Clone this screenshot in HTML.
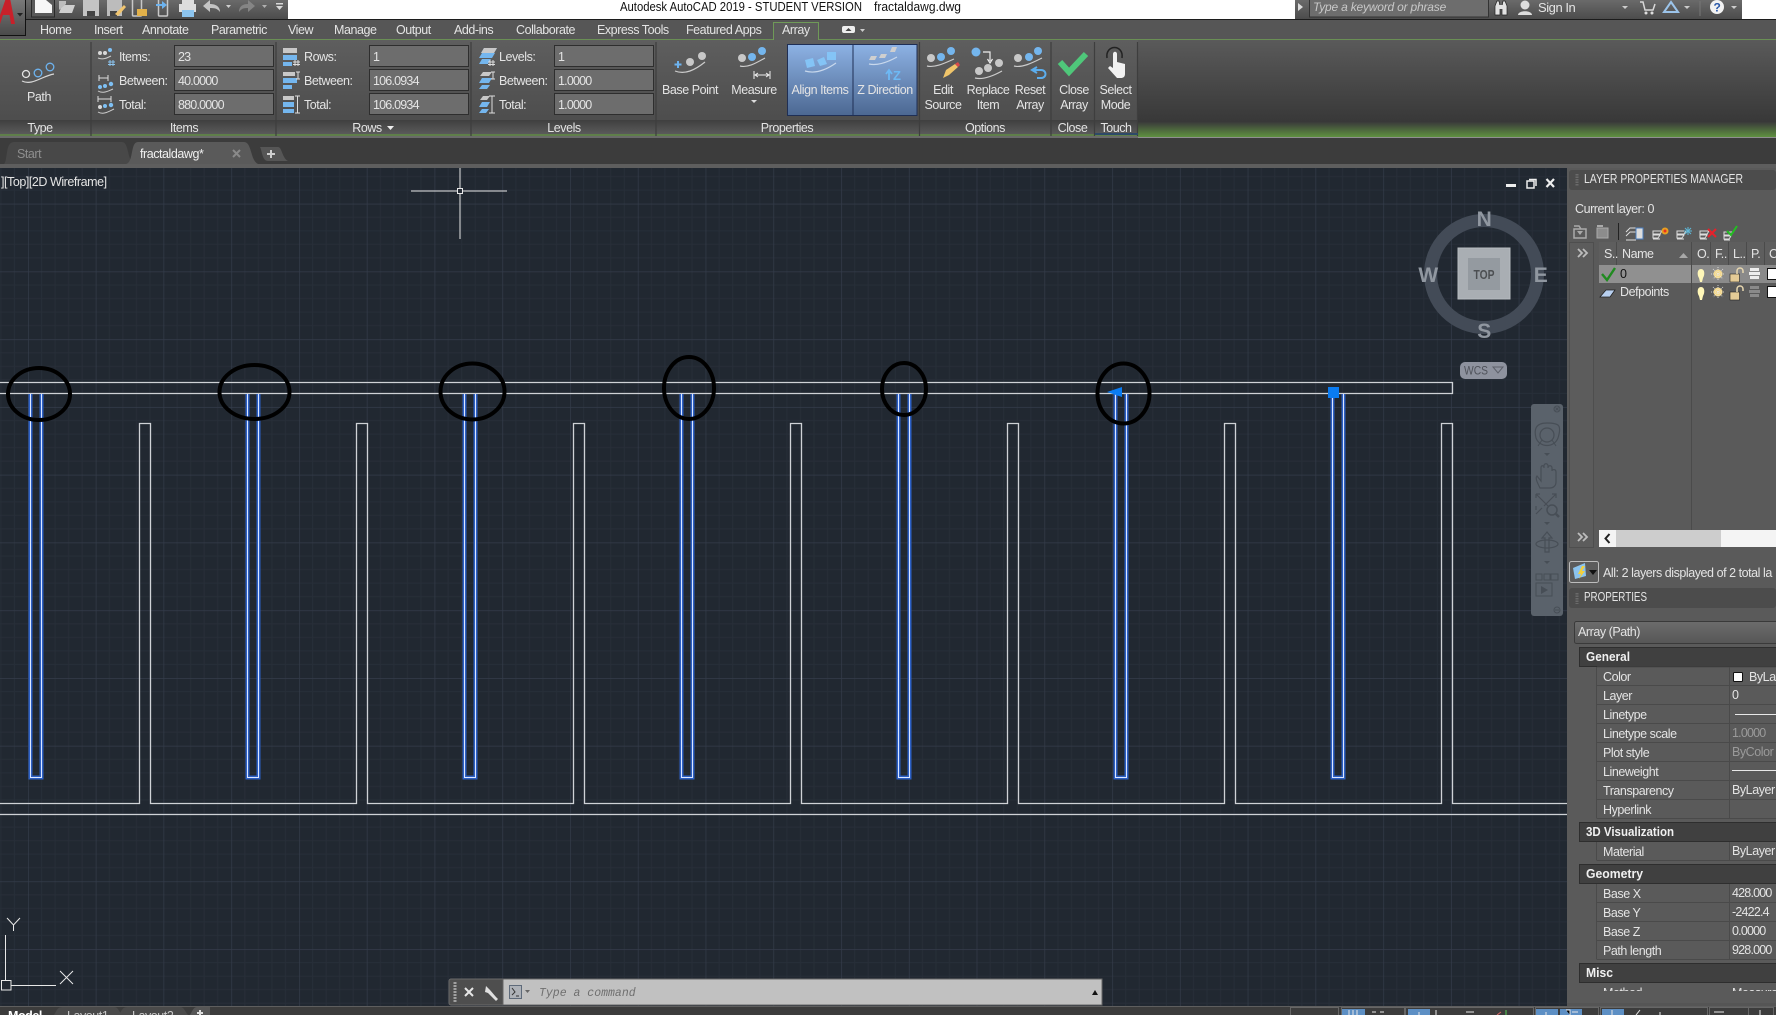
<!DOCTYPE html>
<html><head><meta charset="utf-8"><title>AutoCAD</title>
<style>
html,body{margin:0;padding:0;background:#3b3b3b;width:1776px;height:1015px;overflow:hidden}
svg{display:block}
text{font-family:"Liberation Sans",sans-serif;font-size:12.5px;fill:#e4e4e4;letter-spacing:-.45px}
.c{text-anchor:middle}
.b{font-weight:bold;fill:#f0f0f0}
.g{fill:#9a9a9a}
.v{letter-spacing:-.8px}
</style></head><body>
<svg width="1776" height="1015" viewBox="0 0 1776 1015" xmlns="http://www.w3.org/2000/svg">
<defs>
<linearGradient id="rb" x1="0" y1="0" x2="0" y2="1"><stop offset="0" stop-color="#5e5e5e"/><stop offset="1" stop-color="#4a4a4a"/></linearGradient>
<linearGradient id="rr" x1="0" y1="0" x2="0" y2="1"><stop offset="0" stop-color="#5a5a5a"/><stop offset="1" stop-color="#383838"/></linearGradient>
<linearGradient id="gb" x1="0" y1="0" x2="0" y2="1"><stop offset="0" stop-color="#3a3a3a"/><stop offset="1" stop-color="#5f9140"/></linearGradient>
<linearGradient id="pt" x1="0" y1="0" x2="0" y2="1"><stop offset="0" stop-color="#3f3f3f"/><stop offset="1" stop-color="#5a5a5a"/></linearGradient>
<linearGradient id="bl" x1="0" y1="0" x2="0" y2="1"><stop offset="0" stop-color="#8db2e4"/><stop offset="1" stop-color="#4c6892"/></linearGradient>
<linearGradient id="qa" x1="0" y1="0" x2="0" y2="1"><stop offset="0" stop-color="#6a6a6a"/><stop offset="1" stop-color="#4c4c4c"/></linearGradient>
<linearGradient id="ab" x1="0" y1="0" x2="0" y2="1"><stop offset="0" stop-color="#7a7a7a"/><stop offset="1" stop-color="#4a4a4a"/></linearGradient>
<linearGradient id="dd" x1="0" y1="0" x2="0" y2="1"><stop offset="0" stop-color="#6c6c6c"/><stop offset="1" stop-color="#565656"/></linearGradient>
<pattern id="grid" patternUnits="userSpaceOnUse" width="67.76" height="67.76" patternTransform="translate(28 0.4)">
<rect width="67.76" height="67.76" fill="#212831"/>
<path d="M13.55 0V67.76M27.1 0V67.76M40.65 0V67.76M54.2 0V67.76M0 13.55H67.76M0 27.1H67.76M0 40.65H67.76M0 54.2H67.76" stroke="#272e38" stroke-width="1" fill="none"/>
<path d="M0 0V67.76M0 0H67.76" stroke="#343c4a" stroke-width="1.4" fill="none"/>
</pattern>
</defs>

<!-- title bar -->
<rect width="1776" height="19" fill="#ffffff"/>
<rect width="288" height="19" fill="url(#qa)"/>
<rect x="1295" width="447" height="19" fill="url(#qa)"/>
<rect y="19" width="1776" height="1" fill="#1c1c1c"/>
<text x="620" y="11" textLength="242" lengthAdjust="spacingAndGlyphs" style="font-size:12.5px;fill:#111;letter-spacing:0">Autodesk AutoCAD 2019 - STUDENT VERSION</text>
<text x="874" y="11" textLength="87" lengthAdjust="spacingAndGlyphs" style="font-size:12.5px;fill:#111;letter-spacing:0">fractaldawg.dwg</text>

<!-- quick access icons -->
<rect x="31.500" y="-1" width="23" height="18" fill="#5a5a5a" stroke="#2a2a2a"/>
<path d="M35 0H46L52 5V13H35Z" fill="#f6f6f6"/>
<path d="M59 13 L62 5 H75 L72 13Z" fill="#cfcfcf"/><path d="M59 10V1H66V4" fill="#bdbdbd"/>
<path d="M83 0H99V16H83Z" fill="#c4c4c4"/><rect x="87" y="11" width="8" height="5" fill="#444"/>
<path d="M107 0H122V16H107Z" fill="#bcbcbc"/><rect x="110" y="11" width="7" height="5" fill="#444"/><path d="M115 14L124 5L126 7L118 16Z" fill="#f1c56f"/>
<rect x="132.500" y="-1" width="9" height="17" rx="1" fill="none" stroke="#c8c8c8" stroke-width="1.500"/><path d="M137 9H147V16H137Z" fill="#e2b14a"/>
<rect x="158.500" y="-1" width="9" height="17" rx="1" fill="none" stroke="#c8c8c8" stroke-width="1.500"/><path d="M156 4H162V1L167 5L162 9V6H156Z" fill="#6db3ef"/>
<rect x="182" y="-1" width="12" height="5" fill="#ddd"/><rect x="179" y="4" width="17" height="8" fill="#ddd"/><rect x="182" y="10" width="12" height="7" fill="#8cc4ee"/>
<path d="M203 6L210 0V4C215 4 220 6 220 12C217 8 214 8 210 8V12Z" fill="#c4c4c4"/>
<path d="M226 5H231L228.500 8Z" fill="#d0d0d0"/>
<path d="M255 6L248 0V4C243 4 239 6 239 12C242 8 244 8 248 8V12Z" fill="#858585"/>
<path d="M262 5H267L264.500 8Z" fill="#b0b0b0"/>
<path d="M276 3H283V4.500H276ZM276 6H283L279.500 10Z" fill="#d8d8d8"/>

<!-- right title icons -->
<rect x="1309.500" y="-1" width="179" height="18" fill="#6d6d6d" stroke="#333"/>
<path d="M1298 3L1303 7L1298 11Z" fill="#ddd"/>
<text x="1313" y="11" style="font-size:12px;font-style:italic;fill:#c8c8c8;letter-spacing:-.2px">Type a keyword or phrase</text>
<path d="M1495 15V6L1497 1H1499L1500 6V15ZM1502 15V6L1503 1H1505L1507 6V15Z" fill="#e2e2e2" stroke="#222" stroke-width=".7"/><rect x="1499.500" y="5" width="3" height="4" fill="#e2e2e2"/>
<circle cx="1525" cy="5" r="4.500" fill="#ddd"/><path d="M1518 15C1518 10 1532 10 1532 15Z" fill="#ddd"/>
<text x="1538" y="12" style="font-size:13px">Sign In</text>
<path d="M1622 6H1628L1625 9Z" fill="#ccc"/>
<path d="M1640 2H1643L1645 10H1653L1655 4" stroke="#d8d8d8" stroke-width="1.500" fill="none"/><circle cx="1646" cy="13" r="1.500" fill="#ddd"/><circle cx="1652" cy="13" r="1.500" fill="#ddd"/>
<path d="M1671 2L1678 12H1664Z" stroke="#9cc4ea" stroke-width="2" fill="none"/>
<path d="M1684 6H1690L1687 9Z" fill="#ccc"/>
<rect x="1699.500" y="1" width="1" height="15" fill="#777"/>
<circle cx="1717" cy="7" r="7" fill="#f2f2f2"/><text x="1717" y="11.500" class="c" style="font-size:12px;font-weight:bold;fill:#2a58a8">?</text>
<path d="M1731 6H1737L1734 9Z" fill="#ccc"/>

<!-- menu -->
<rect y="20" width="1776" height="19" fill="#565656"/>
<rect y="39" width="1776" height="1" fill="#6a8f55"/>
<g>
<text x="40" y="34">Home</text><text x="94" y="34">Insert</text><text x="142" y="34">Annotate</text><text x="211" y="34">Parametric</text><text x="288" y="34">View</text><text x="334" y="34">Manage</text><text x="396" y="34">Output</text><text x="454" y="34">Add-ins</text><text x="516" y="34">Collaborate</text><text x="597" y="34">Express Tools</text><text x="686" y="34">Featured Apps</text>
</g>
<path d="M773.500 40V22.500H818.500V40" fill="#5c5c5c" stroke="#6f9a58"/>
<text x="782" y="34">Array</text>
<rect x="842" y="26" width="13" height="7" rx="2" fill="#eee"/><path d="M845.500 31L848.500 28L851.500 31Z" fill="#444"/>
<path d="M860 29H865L862.500 32Z" fill="#ccc"/>

<!-- ribbon -->
<rect y="40" width="1138" height="97" fill="url(#rb)"/>
<rect x="1138" y="40" width="638" height="82" fill="url(#rr)"/>
<rect x="1138" y="122" width="638" height="15" fill="url(#gb)"/>
<rect x="1138" y="137" width="638" height="1" fill="#8f8f8f"/>
<rect y="120" width="1138" height="14" fill="url(#pt)"/>
<rect y="134" width="1138" height="2" fill="#5f7f4a"/>
<rect y="136" width="1138" height="2" fill="#6a6a6a"/>
<path d="M91 42V136M276 42V136M471 42V136M656 42V136M919.500 42V136M1051 42V136M1094.500 42V136M1137.500 42V136" stroke="#3e3e3e" stroke-width="1.200"/>
<rect x="1095" y="133" width="43" height="2" fill="#2d4a68"/>
<text class="c" x="40" y="132">Type</text><text class="c" x="184" y="132">Items</text><text class="c" x="367" y="132">Rows</text><path d="M387 126H394L390.500 130Z" fill="#eee"/><text class="c" x="564" y="132">Levels</text><text class="c" x="787" y="132">Properties</text><text class="c" x="985" y="132">Options</text><text class="c" x="1072.500" y="132">Close</text><text class="c" x="1116" y="132">Touch</text>

<!-- A logo -->
<rect x="-1" y="-1" width="26.500" height="36.500" fill="url(#ab)" stroke="#111"/>
<path d="M-3 24L6 -2H10L15 24H11L9.500 15H3L0 24Z" fill="#c8202a"/>
<path d="M17 13H23L20 16.500Z" fill="#222"/>

<!-- path icon -->
<circle cx="26" cy="74" r="3.500" fill="none" stroke="#e4e4e4" stroke-width="1.300"/><circle cx="38" cy="73" r="3.800" fill="none" stroke="#6db3ef" stroke-width="1.300"/><circle cx="50" cy="67" r="3.800" fill="none" stroke="#6db3ef" stroke-width="1.300"/>
<path d="M22 81C32 86 42 76 54 74" fill="none" stroke="#d8d8d8" stroke-width="1.200"/>
<text class="c" x="39" y="101">Path</text>

<!-- fields -->
<g fill="#6d6d6d" stroke="#2e2e2e" stroke-width="1">
<rect x="174.500" y="45.500" width="99" height="21"/><rect x="174.500" y="69.500" width="99" height="21"/><rect x="174.500" y="93.500" width="99" height="21"/>
<rect x="369.500" y="45.500" width="99" height="21"/><rect x="369.500" y="69.500" width="99" height="21"/><rect x="369.500" y="93.500" width="99" height="21"/>
<rect x="554.500" y="45.500" width="99" height="21"/><rect x="554.500" y="69.500" width="99" height="21"/><rect x="554.500" y="93.500" width="99" height="21"/>
</g>
<text x="119" y="61">Items:</text><text x="119" y="85">Between:</text><text x="119" y="109">Total:</text>
<text x="304" y="61">Rows:</text><text x="304" y="85">Between:</text><text x="304" y="109">Total:</text>
<text x="499" y="61">Levels:</text><text x="499" y="85">Between:</text><text x="499" y="109">Total:</text>
<text class="v" x="178" y="61">23</text><text class="v" x="178" y="85">40.0000</text><text class="v" x="178" y="109">880.0000</text>
<text class="v" x="373" y="61">1</text><text class="v" x="373" y="85">106.0934</text><text class="v" x="373" y="109">106.0934</text>
<text class="v" x="558" y="61">1</text><text class="v" x="558" y="85">1.0000</text><text class="v" x="558" y="109">1.0000</text>

<!-- items icons -->
<g fill="#d8d8d8"><circle cx="100" cy="53" r="2"/><circle cx="105" cy="53" r="2"/></g>
<circle cx="110" cy="50" r="2" fill="#7ec0f4"/><path d="M98 58C103 60 107 58 111 56" stroke="#ccc" fill="none"/><path d="M110 60V66M113 60V66M108 62H115M108 64.500H115" stroke="#8cc4ee"/>
<path d="M99 75V81M108 75V81M99 78H108" stroke="#ddd"/><circle cx="100" cy="87" r="2" fill="#7ec0f4"/><circle cx="105" cy="86" r="2" fill="#7ec0f4"/><circle cx="111" cy="84" r="2.200" fill="#7ec0f4"/><path d="M98 91C103 94 108 91 113 89" stroke="#ccc" fill="none"/>
<path d="M98 96V102M111 96V102M98 99H111" stroke="#ddd"/><circle cx="100" cy="107" r="2" fill="#d8d8d8"/><circle cx="105" cy="106" r="2" fill="#7ec0f4"/><circle cx="111" cy="105" r="2.200" fill="#7ec0f4"/><path d="M98 112C103 115 108 112 114 109" stroke="#ccc" fill="none"/>
<!-- rows icons -->
<rect x="283" y="48" width="14" height="5" fill="#c8c8c8"/><rect x="283" y="55" width="14" height="5" fill="#74b6ee"/><rect x="283" y="62" width="9" height="4" fill="#74b6ee"/><path d="M295 60V66M298 60V66M293 62H300M293 64.500H300" stroke="#ddd"/>
<rect x="283" y="72" width="12" height="4" fill="#c8c8c8"/><rect x="283" y="78" width="14" height="5" fill="#74b6ee"/><rect x="283" y="85" width="9" height="4" fill="#74b6ee"/><path d="M296 72H300M296 79H300M298 72V79" stroke="#ddd"/>
<rect x="283" y="96" width="11" height="4" fill="#c8c8c8"/><rect x="283" y="102" width="11" height="5" fill="#74b6ee"/><rect x="283" y="109" width="11" height="4" fill="#74b6ee"/><path d="M295 96H300M295 113H300M297.500 96V113" stroke="#ddd"/>
<!-- level icons -->
<path d="M481 53L484 48H497L494 53ZM479 58L482 53H495L492 58ZM479 64L482 59H491L488 64Z" fill="#74b6ee"/><path d="M481 53L484 48H497L494 53Z" fill="#c8c8c8"/><path d="M490 60V66M493 60V66M488 62H495M488 64.500H495" stroke="#ddd"/>
<path d="M480 76L483 72H492L489 76Z" fill="#c8c8c8"/><path d="M479 83L482 78H492L489 83ZM479 89L482 85H490L487 89Z" fill="#74b6ee"/><path d="M491 72H495M491 79H495M493 72V79" stroke="#ddd"/>
<path d="M480 100L483 96H490L487 100Z" fill="#c8c8c8"/><path d="M479 107L482 102H490L487 107ZM479 113L482 109H489L486 113Z" fill="#74b6ee"/><path d="M489 96H495M489 113H495M492 96V113" stroke="#ddd"/>

<!-- properties -->
<path d="M675 71C685 75 695 70 705 62" fill="none" stroke="#ccc" stroke-width="1.200"/><circle cx="690" cy="62" r="4" fill="#c8c8c8"/><circle cx="702" cy="56" r="4" fill="#c8c8c8"/><path d="M678 61V68M674.500 64.500H681.500" stroke="#6db3ef" stroke-width="2"/>
<text class="c" x="690" y="94">Base Point</text>
<circle cx="742" cy="58" r="4" fill="#c8c8c8"/><circle cx="752" cy="57" r="4" fill="#74b6ee"/><circle cx="762" cy="51" r="4" fill="#74b6ee"/><path d="M740 66C748 68 756 63 765 58" stroke="#ccc" fill="none" stroke-width="1.200"/><path d="M754 71V79M770 71V79M755 75H769M758 73L755 75L758 77M766 73L769 75L766 77" stroke="#eee" fill="none"/>
<text class="c" x="754" y="94">Measure</text><path d="M751 100H757L754 103Z" fill="#ddd"/>
<rect x="787.500" y="44.500" width="65.500" height="71" fill="url(#bl)" stroke="#1f2f55"/><rect x="853" y="44.500" width="64" height="71" fill="url(#bl)" stroke="#1f2f55"/>
<path d="M805 60L813 58L815 66L807 68ZM817 60L824 57L827 64L820 66ZM827 52H836V60H827Z" fill="#84c4f6"/><path d="M805 71C815 74 826 70 836 63" stroke="#c8d8ec" fill="none" stroke-width="1.200"/>
<text class="c" x="820" y="94">Align Items</text>
<path d="M869 60L871 56H877L875 60ZM879 58L881 54H887L885 58ZM890 52L892 47H897L895 52Z" fill="#cfcfcf"/><path d="M869 64C878 66 888 62 897 57" stroke="#c8d8ec" fill="none" stroke-width="1.200"/>
<path d="M889 80V71M886 74L889 70L892 74" stroke="#6db9f5" stroke-width="1.800" fill="none"/><text x="893" y="80" style="font-size:13px;font-weight:bold;fill:#6db9f5">Z</text>
<text class="c" x="885" y="94">Z Direction</text>
<circle cx="931" cy="58" r="4" fill="#c8c8c8"/><circle cx="941" cy="57" r="4" fill="#74b6ee"/><circle cx="951" cy="51" r="4" fill="#74b6ee"/><path d="M927 66C935 68 945 63 954 59" stroke="#ccc" fill="none" stroke-width="1.200"/>
<path d="M943 78L946 70L955 64L958 67L949 75Z" fill="#f0c56a"/><path d="M955 64L958 62L960 65L958 67Z" fill="#d84a4a"/>
<text class="c" x="943" y="94">Edit</text><text class="c" x="943" y="109">Source</text>
<circle cx="976" cy="52" r="4.500" fill="#74b6ee"/><path d="M983 52H990V61M987.500 59L990 63L992.500 59" stroke="#eee" fill="none" stroke-width="1.200"/>
<circle cx="979" cy="71" r="4" fill="#c8c8c8"/><circle cx="988" cy="68" r="4" fill="#c8c8c8"/><circle cx="999" cy="63" r="4" fill="#c8c8c8"/><path d="M975 78C983 80 993 76 1002 71" stroke="#ccc" fill="none" stroke-width="1.200"/>
<text class="c" x="988" y="94">Replace</text><text class="c" x="988" y="109">Item</text>
<circle cx="1018" cy="58" r="4" fill="#c8c8c8"/><circle cx="1029" cy="57" r="4" fill="#74b6ee"/><circle cx="1038" cy="51" r="4" fill="#74b6ee"/><path d="M1014 66C1022 68 1032 63 1042 58" stroke="#ccc" fill="none" stroke-width="1.200"/>
<path d="M1033 70H1041C1047 70 1047 78 1041 78H1037M1037 67L1032 70L1037 73" stroke="#5caeee" stroke-width="2" fill="none"/>
<text class="c" x="1030" y="94">Reset</text><text class="c" x="1030" y="109">Array</text>
<path d="M1060 62L1069 72L1086 54" stroke="#4fc77a" stroke-width="6" fill="none"/>
<text class="c" x="1074" y="94">Close</text><text class="c" x="1074" y="109">Array</text>
<path d="M1107 58C1105 44 1124 44 1122 58" stroke="#222" stroke-width="1.500" fill="none"/>
<path d="M1113 54C1113 51 1117 51 1117 54V62L1125 64V74C1125 77 1123 78 1121 78H1117L1108 68L1110 66L1113 68Z" fill="#f2f2f2"/>
<text class="c" x="1115.500" y="94">Select</text><text class="c" x="1115.500" y="109">Mode</text>

<!-- tab bar -->
<rect y="138" width="1776" height="26" fill="#3c3c3c"/>
<rect y="164" width="1776" height="4" fill="#5e5e5e"/>
<path d="M4 164C8 160 5 142 14 142H122C129 142 127 160 134 164Z" fill="#484848"/>
<path d="M126 164C134 162 130 142 138 142H244C252 142 250 160 258 164Z" fill="#5a5a5a"/>
<path d="M260 147H278C282 147 282 158 288 161H268C262 161 262 150 260 147Z" fill="#565656"/>
<text x="17" y="158" style="fill:#8e8e8e">Start</text>
<text x="140" y="158" style="fill:#f0f0f0">fractaldawg*</text>
<path d="M233 150L240 157M240 150L233 157" stroke="#8a8a8a" stroke-width="2"/>
<path d="M271 150V158M267 154H275" stroke="#cfcfcf" stroke-width="2"/>

<!-- canvas -->
<rect y="168" width="1567" height="838" fill="url(#grid)"/>
<text x="1" y="186" style="fill:#e4e4e4">][Top][2D Wireframe]</text>

<!-- crosshair -->
<path d="M411 191H457M463 191H507M460 168V188M460 194V239" stroke="#e8e8e8" stroke-width="1" shape-rendering="crispEdges"/>
<rect x="457.500" y="188.500" width="5" height="5" fill="none" stroke="#e8e8e8"/>

<!-- drawing white -->
<path d="M0 382.500H1452.500V393.500H0" fill="none" stroke="#cfd2d6" stroke-width="1.300"/>
<path d="M0 803.500H139.500V423.500H150.500V803.500H356.500V423.500H367.500V803.500H573.500V423.500H584.500V803.500H790.500V423.500H801.500V803.500H1007.500V423.500H1018.500V803.500H1224.500V423.500H1235.500V803.500H1441.500V423.500H1452.500V803.500H1567" fill="none" stroke="#cfd2d6" stroke-width="1.300"/>
<path d="M0 814.500H1567" fill="none" stroke="#cfd2d6" stroke-width="1.300"/>

<!-- selected array -->
<g fill="none" stroke="#2c5fc4" stroke-width="4">
<path d="M30.500 394V777.500H41.500V394"/><path d="M247.500 394V777.500H258.500V394"/><path d="M464.500 394V777.500H475.500V394"/><path d="M681.500 394V777.500H692.500V394"/><path d="M898.500 394V777.500H909.500V394"/><path d="M1115.500 394V777.500H1126.500V394"/><path d="M1332.500 394V777.500H1343.500V394"/>
</g>
<g fill="none" stroke="#dbe6ff" stroke-width="1">
<path d="M30.500 394V777.500H41.500V394"/><path d="M247.500 394V777.500H258.500V394"/><path d="M464.500 394V777.500H475.500V394"/><path d="M681.500 394V777.500H692.500V394"/><path d="M898.500 394V777.500H909.500V394"/><path d="M1115.500 394V777.500H1126.500V394"/><path d="M1332.500 394V777.500H1343.500V394"/>
</g>
<!-- grips -->
<path d="M1107 392L1122 387V397Z" fill="#0a7cf2"/>
<rect x="1328" y="387" width="11" height="11" fill="#0a7cf2"/>

<!-- hand-drawn ellipses -->
<g fill="none" stroke="#000" stroke-width="4">
<ellipse cx="39" cy="394" rx="31" ry="26"/>
<ellipse cx="254.500" cy="392" rx="35" ry="27"/>
<ellipse cx="472.500" cy="391.500" rx="32" ry="28"/>
<ellipse cx="689" cy="388" rx="25" ry="31"/>
<ellipse cx="904" cy="389" rx="22" ry="26"/>
<ellipse cx="1123.500" cy="393.500" rx="26" ry="30"/>
</g>

<!-- UCS -->
<path d="M5.500 935V980M11 985.500H56M7 918L13.500 925L20 918M13.500 925V931" stroke="#e8e8e8" stroke-width="1" fill="none"/>
<path d="M60 971L73 984M73 971L60 984" stroke="#e8e8e8" fill="none" stroke-width="1"/>
<rect x="1.500" y="980.500" width="9.500" height="9.500" fill="none" stroke="#e8e8e8"/>

<!-- window controls -->
<rect x="1506" y="184" width="10" height="3" fill="#eee"/>
<rect x="1527" y="181" width="7" height="7" fill="none" stroke="#eee" stroke-width="1.500"/><path d="M1529 179.500H1536V186" fill="none" stroke="#eee" stroke-width="1.500"/>
<path d="M1546.500 179L1554 187M1554 179L1546.500 187" stroke="#eee" stroke-width="2.200"/>

<!-- view cube -->
<circle cx="1484" cy="274" r="53.500" fill="none" stroke="#434b57" stroke-width="13"/>
<rect x="1458" y="248" width="52" height="51" fill="#a9aeb3" stroke="#b8bcc0"/>
<rect x="1468" y="258" width="32" height="32" fill="#949aa0"/>
<text class="c" x="1484" y="279" textLength="21" lengthAdjust="spacingAndGlyphs" style="font-size:13px;font-weight:bold;fill:#4c4f52;letter-spacing:0">TOP</text>
<text class="c" x="1484" y="226" style="font-size:21px;font-weight:bold;fill:#9097a0">N</text>
<text class="c" x="1484" y="338" style="font-size:21px;font-weight:bold;fill:#9097a0">S</text>
<text class="c" x="1428" y="282" style="font-size:21px;font-weight:bold;fill:#9097a0">W</text>
<text class="c" x="1540.500" y="282" style="font-size:21px;font-weight:bold;fill:#9097a0">E</text>
<rect x="1460" y="362" width="47" height="17" rx="5" fill="#8e929e"/>
<text x="1464" y="374.500" textLength="24" lengthAdjust="spacingAndGlyphs" style="font-size:12px;fill:#4f525a;letter-spacing:0">WCS</text>
<path d="M1493 367H1503L1498 373Z" fill="none" stroke="#5d606a"/>

<!-- nav bar -->
<rect x="1531" y="404" width="32" height="212" rx="3" fill="#5a626b"/>
<circle cx="1557" cy="409" r="3" fill="none" stroke="#474e56"/><path d="M1555.500 407.500L1558.500 410.500M1558.500 407.500L1555.500 410.500" stroke="#474e56"/>
<path d="M1547 423C1559 423 1562 425 1558 438C1554 448 1540 448 1536 438C1534 430 1535 423 1547 423Z" fill="none" stroke="#474e56" stroke-width="1.200"/><circle cx="1547" cy="435" r="7" fill="none" stroke="#474e56" stroke-width="1.200"/><path d="M1538 446L1542 440M1556 446L1552 440" stroke="#474e56"/>
<path d="M1544 453H1550L1547 456Z" fill="#474e56"/>
<path d="M1540 488C1537 482 1535 478 1537 476L1541 481V468C1541 465 1544 465 1544 468V466C1544 463 1548 463 1548 466V468C1548 465 1552 465 1552 468V471C1552 469 1556 469 1556 472V482C1556 486 1553 488 1550 488Z" fill="none" stroke="#474e56" stroke-width="1.200"/>
<path d="M1536 494L1548 506M1552 494H1556V498M1536 506V510M1556 494L1544 506M1536 494H1540M1536 494V498M1536 514L1542 508" fill="none" stroke="#474e56" stroke-width="1.200"/><circle cx="1552" cy="510" r="5" fill="none" stroke="#474e56" stroke-width="1.500"/><path d="M1556 514L1559 517" stroke="#474e56" stroke-width="2.500"/>
<path d="M1544 522H1550L1547 525Z" fill="#474e56"/>
<path d="M1547 532L1552 538H1549V552H1545V538H1542Z" fill="none" stroke="#474e56" stroke-width="1.200"/><ellipse cx="1547" cy="544" rx="11" ry="4" fill="none" stroke="#474e56" stroke-width="1.200"/>
<path d="M1544 561H1550L1547 564Z" fill="#474e56"/>
<rect x="1536" y="574" width="6" height="6" fill="none" stroke="#474e56"/><rect x="1544" y="574" width="6" height="6" fill="none" stroke="#474e56"/><rect x="1551" y="574" width="7" height="6" fill="none" stroke="#474e56"/>
<rect x="1536" y="583" width="16" height="13" fill="none" stroke="#474e56"/><path d="M1541 586L1548 590L1541 594Z" fill="#474e56"/>
<circle cx="1557" cy="610" r="3" fill="none" stroke="#474e56"/><path d="M1555 610H1559" stroke="#474e56"/>

<!-- command line -->
<rect x="449" y="979" width="55" height="26" rx="2" fill="#4e4e4e" stroke="#6a6a6a"/>
<rect x="503" y="979" width="599" height="26" fill="#c1c1c1" stroke="#666"/>
<path d="M455 982V1002" stroke="#a0a0a0" stroke-width="3" stroke-dasharray="2 1"/>
<path d="M465 988L473 996M473 988L465 996" stroke="#e6e6e6" stroke-width="2"/>
<path d="M486 986L490 990L496 997L498 999L496 1001L494 999L488 993L485 992Z" fill="#e0e0e0"/>
<rect x="509.500" y="985.500" width="12" height="13" fill="#aeb2b8" stroke="#5e6a7a"/><path d="M512 988L515 992L512 995M516 996H519" stroke="#333" fill="none"/>
<path d="M525 990H530L527.500 993Z" fill="#666"/>
<text x="539" y="996" style="font-family:'Liberation Mono',monospace;font-size:11.500px;font-style:italic;fill:#6f6f6f;letter-spacing:0">Type a command</text>
<path d="M1092 995L1095 990L1098 995Z" fill="#111"/>

<!-- bottom status bar -->
<rect y="1006" width="1776" height="9" fill="#3c3c3c"/>
<rect y="1006" width="1776" height="1" fill="#5e5e5e"/>
<text x="8" y="1020" style="font-weight:bold;fill:#fff">Model</text>
<path d="M54 1015C58 1008 58 1007 64 1007H114C118 1007 118 1010 122 1015ZM119 1015C123 1008 123 1007 129 1007H180C184 1007 184 1010 188 1015Z" fill="#4a4a4a"/>
<text x="67" y="1020" style="fill:#c8c8c8">Layout1</text><text x="132" y="1020" style="fill:#c8c8c8">Layout2</text>
<path d="M190 1015C194 1008 194 1007 198 1007H210V1015Z" fill="#565656"/><path d="M200 1010V1015M197 1013H203" stroke="#ddd" stroke-width="2"/>
<g fill="none" stroke="#666"><rect x="1290.500" y="1007.500" width="48" height="10"/><rect x="1341.500" y="1007.500" width="63" height="10"/><rect x="1405.500" y="1007.500" width="128" height="10"/><rect x="1535.500" y="1007.500" width="63" height="10"/><rect x="1600.500" y="1007.500" width="107" height="10"/><rect x="1709.500" y="1007.500" width="39" height="10"/><rect x="1748.500" y="1007.500" width="25" height="10"/></g>
<rect x="1342" y="1009" width="23" height="7" fill="#5d8fc4"/><rect x="1408" y="1009" width="22" height="7" fill="#5d8fc4"/><rect x="1536" y="1009" width="22" height="7" fill="#5d8fc4"/><rect x="1560" y="1009" width="22" height="7" fill="#5d8fc4"/><rect x="1602" y="1009" width="22" height="7" fill="#5d8fc4"/>
<path d="M1349 1010V1015M1353 1010V1015M1357 1010V1015M1372 1012H1376M1380 1012H1384M1419 1012V1015M1436 1010V1015M1466 1012H1474M1546 1012V1015M1566 1010H1570V1015M1572 1012H1578M1612 1010V1015M1640 1010L1636 1015M1660 1012V1015M1714 1012H1724M1760 1010V1015" stroke="#e6e6e6" stroke-width="1"/>
<path d="M1501 1012L1497 1015" stroke="#d66" stroke-width="1"/><path d="M1506 1010V1015" stroke="#5c5" stroke-width="1"/>

<!-- right panel -->
<rect x="1567" y="168" width="209" height="835" fill="#5a5a5a"/>
<rect x="1567" y="1003" width="209" height="3" fill="#555"/>
<rect x="1567" y="164" width="209" height="4" fill="#5e5e5e"/>
<rect x="1569" y="170" width="207" height="20" rx="3" fill="#4c4c4c"/>
<path d="M1577 174V186" stroke="#6a6a6a" stroke-width="3" stroke-dasharray="1.500 1"/>
<text x="1584" y="183" textLength="159" lengthAdjust="spacingAndGlyphs" style="letter-spacing:0">LAYER PROPERTIES MANAGER</text>
<text x="1575" y="213">Current layer: 0</text>
<!-- layer toolbar -->
<path d="M1574 229H1586V238H1574ZM1574 226H1579L1581 229" fill="none" stroke="#aaa" stroke-width="1.500"/><path d="M1577 231H1583L1580 235Z" fill="#aaa"/>
<path d="M1597 228H1608V238H1597Z" fill="#8c8c8c" stroke="#aaa"/><path d="M1597 226H1603" stroke="#aaa" stroke-width="2"/>
<rect x="1618" y="223" width="1" height="17" fill="#222"/>
<path d="M1626 232L1630 228H1640M1626 236L1630 232H1636M1626 240H1636" stroke="#ddd" fill="none"/><rect x="1636" y="228" width="7" height="11" fill="#ddd" stroke="#4a7fc0"/>
<path d="M1653 231H1662L1660 234H1653ZM1653 235H1660L1658 238H1653ZM1653 239H1660" fill="none" stroke="#ddd"/><circle cx="1665" cy="231" r="3.500" fill="#e8a020"/><circle cx="1665" cy="231" r="1.500" fill="#e83020"/>
<path d="M1677 231H1686L1684 234H1677ZM1677 235H1684L1682 238H1677ZM1677 239H1684" fill="none" stroke="#ddd"/><path d="M1688 227V235M1684 231H1692M1685 228L1691 234M1691 228L1685 234" stroke="#5fb8d8"/>
<path d="M1700 231H1709L1707 234H1700ZM1700 235H1707L1705 238H1700ZM1700 239H1707" fill="none" stroke="#ddd"/><path d="M1708 229L1716 237M1716 229L1708 237" stroke="#e8202a" stroke-width="2"/>
<path d="M1724 232H1733L1731 235H1724ZM1724 236H1731L1729 239H1724ZM1724 240H1730" fill="none" stroke="#ddd"/><path d="M1727 231L1731 235L1737 226" stroke="#22c022" stroke-width="2" fill="none"/>
<!-- gutter + table -->
<rect x="1569.500" y="242.500" width="24" height="305" fill="#5c5c5c" stroke="#4e4e4e"/>
<path d="M1578 249L1582 253L1578 257M1583 249L1587 253L1583 257" stroke="#bdbdbd" stroke-width="1.800" fill="none"/>
<path d="M1578 533L1582 537L1578 541M1583 533L1587 537L1583 541" stroke="#bdbdbd" stroke-width="1.800" fill="none"/>
<rect x="1599" y="242" width="177" height="23" fill="#5e5e5e"/>
<path d="M1616.500 242V265M1691.500 242V530M1710.500 242V265M1728.500 242V265M1746.500 242V265M1764.500 242V265" stroke="#4b4b4b"/>
<text x="1604" y="258">S..</text><text x="1622" y="258">Name</text><path d="M1679 258H1688L1683.500 253Z" fill="#a8a8a8"/>
<text x="1697" y="258">O.</text><text x="1715" y="258">F..</text><text x="1733" y="258">L..</text><text x="1751" y="258">P.</text><text x="1769" y="258">C</text>
<rect x="1599" y="265" width="92" height="18" fill="#909090"/><rect x="1692" y="265" width="84" height="18" fill="#8a8a8a"/>
<path d="M1602 274L1607 280L1615 268" stroke="#1f8a1f" stroke-width="2.400" fill="none"/>
<text x="1620" y="278" style="fill:#111">0</text>
<path d="M1600 297L1606 290H1615L1610 297Z" fill="#b8d0f0" stroke="#222" stroke-width=".8"/>
<text x="1620" y="296">Defpoints</text>
<!-- lights -->
<g>
<path d="M1701 269C1697 269 1697 275 1699 278L1700 282H1702L1703 278C1705 275 1705 269 1701 269Z" fill="#fff7b8"/>
<path d="M1701 287C1697 287 1697 293 1699 296L1700 300H1702L1703 296C1705 293 1705 287 1701 287Z" fill="#fff7b8"/>
<circle cx="1718" cy="274" r="4.500" fill="#f5d98a"/><path d="M1718 267V281M1711 274H1725M1713 269L1723 279M1723 269L1713 279" stroke="#e8e8e8" stroke-width=".8" stroke-dasharray="1 1"/>
<circle cx="1718" cy="292" r="4.500" fill="#f5d98a"/><path d="M1718 285V299M1711 292H1725M1713 287L1723 297M1723 287L1713 297" stroke="#e8e8e8" stroke-width=".8" stroke-dasharray="1 1"/>
<rect x="1730" y="274" width="9.500" height="8" fill="#e4cb96" stroke="#222" stroke-width=".6"/><path d="M1737 274V271C1737 267 1743 267 1743 271V273" fill="none" stroke="#e8d8b0" stroke-width="1.500"/>
<rect x="1730" y="292" width="9.500" height="8" fill="#e4cb96" stroke="#222" stroke-width=".6"/><path d="M1737 292V289C1737 285 1743 285 1743 289V291" fill="none" stroke="#e8d8b0" stroke-width="1.500"/>
<rect x="1750" y="268" width="9" height="3" fill="#eee"/><rect x="1749" y="272" width="11" height="3" fill="#eee"/><rect x="1750" y="276" width="9" height="3" fill="#eee"/>
<rect x="1750" y="286" width="9" height="3" fill="#8a8a8a"/><rect x="1749" y="290" width="11" height="3" fill="#8a8a8a"/><rect x="1750" y="294" width="9" height="3" fill="#8a8a8a"/>
<rect x="1767.500" y="268.500" width="12" height="11" fill="#fff" stroke="#111"/>
<rect x="1767.500" y="286.500" width="12" height="11" fill="#fff" stroke="#111"/>
</g>
<!-- scrollbar -->
<rect x="1599" y="530" width="177" height="17" fill="#f4f4f4"/>
<path d="M1609.500 534L1605.500 538.500L1609.500 543" fill="none" stroke="#222" stroke-width="2"/>
<rect x="1616" y="530" width="105" height="17" fill="#cdcdcd"/>
<!-- filter -->
<rect x="1569.500" y="561.500" width="29" height="21" rx="2" fill="#5c5c5c" stroke="#bdbdbd"/>
<path d="M1573 568L1585 563L1586 576L1575 579Z" fill="#8cc4ee"/><path d="M1582 566L1578 574H1581L1579 579L1585 571H1582L1585 566Z" fill="#f3d03c"/>
<path d="M1589 570H1597L1593 575Z" fill="#111"/>
<text x="1603" y="577">All: 2 layers displayed of 2 total la</text>
<!-- properties -->
<rect x="1569" y="588" width="207" height="20" rx="3" fill="#4c4c4c"/>
<path d="M1577 593V604" stroke="#6a6a6a" stroke-width="3" stroke-dasharray="1.500 1"/>
<text x="1584" y="601" textLength="63" lengthAdjust="spacingAndGlyphs" style="letter-spacing:0">PROPERTIES</text>
<rect x="1574.500" y="621.500" width="203" height="22" rx="2" fill="url(#dd)" stroke="#3a3a3a"/>
<text x="1578" y="636">Array (Path)</text>

<g fill="#404040" stroke="#2e2e2e">
<rect x="1579.500" y="647.500" width="200" height="19"/><rect x="1579.500" y="822.500" width="200" height="19"/><rect x="1579.500" y="864.500" width="200" height="19"/><rect x="1579.500" y="963.500" width="200" height="19"/>
</g>
<text x="1586" y="661" class="b" textLength="44" lengthAdjust="spacingAndGlyphs" style="letter-spacing:0">General</text>
<text x="1586" y="836" class="b" textLength="88" lengthAdjust="spacingAndGlyphs" style="letter-spacing:0">3D Visualization</text>
<text x="1586" y="878" class="b" textLength="57" lengthAdjust="spacingAndGlyphs" style="letter-spacing:0">Geometry</text>
<text x="1586" y="977" class="b" textLength="27" lengthAdjust="spacingAndGlyphs" style="letter-spacing:0">Misc</text>

<path d="M1597 667H1776M1597 685.500H1776M1597 704.500H1776M1597 723.500H1776M1597 742.500H1776M1597 761.500H1776M1597 780.500H1776M1597 799.500H1776M1597 818.500H1776M1597 860.500H1776M1597 902.500H1776M1597 921.500H1776M1597 940.500H1776M1597 959.500H1776M1596.500 667V818.500M1596.500 842V860.500M1596.500 884V959.500M1729.500 667V818.500M1729.500 842V860.500M1729.500 884V959.500" stroke="#4a4a4a" fill="none"/>

<text x="1603" y="681">Color</text><text x="1603" y="700">Layer</text><text x="1603" y="719">Linetype</text><text x="1603" y="738">Linetype scale</text><text x="1603" y="757">Plot style</text><text x="1603" y="776">Lineweight</text><text x="1603" y="795">Transparency</text><text x="1603" y="814">Hyperlink</text>
<text x="1603" y="856">Material</text>
<text x="1603" y="898">Base X</text><text x="1603" y="917">Base Y</text><text x="1603" y="936">Base Z</text><text x="1603" y="955">Path length</text>
<rect x="1733.500" y="672.500" width="9" height="9" rx="1" fill="#fff" stroke="#111"/>
<text x="1749" y="681">ByLay</text>
<text x="1732" y="699">0</text>
<path d="M1735 714.500H1776M1732 770.500H1776" stroke="#e8e8e8"/>
<text x="1732" y="737" class="g v">1.0000</text><text x="1732" y="756" class="g">ByColor</text>
<text x="1732" y="794">ByLayer</text><text x="1732" y="855">ByLayer</text>
<text x="1732" y="897" class="v">428.000</text><text x="1732" y="916" class="v">-2422.4</text><text x="1732" y="935" class="v">0.0000</text><text x="1732" y="954" class="v">928.000</text>
<svg x="1597" y="984" width="179" height="7"><text x="6" y="13">Method</text><text x="135" y="13">Measure</text></svg>
</svg>
</body></html>
